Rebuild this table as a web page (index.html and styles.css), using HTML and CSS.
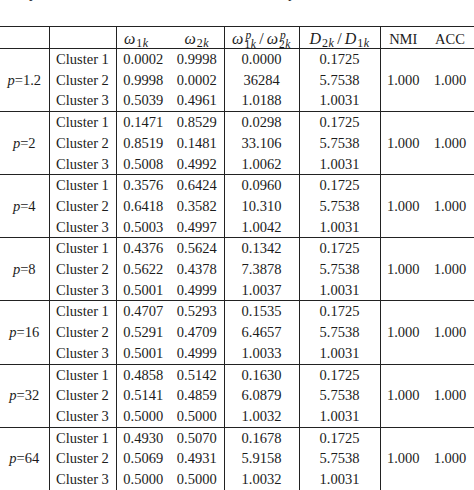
FILE: index.html
```html
<!DOCTYPE html>
<html lang="en">
	<head>
		<meta charset="UTF-8">
		<meta name="viewport" content="width=device-width, initial-scale=1.0">
		<title>Cluster weights for different p</title>
		<link rel="stylesheet" href="styles.css">
	</head>
	<body>
		<div class="caption">Clarity in the NMI ratios for the chosen value of <i>p</i> for all</div>

		<table class="results">
			<colgroup>
				<col class="c-p"><col class="c-cl"><col class="c-w"><col class="c-w">
				<col class="c-ratio"><col class="c-dist"><col class="c-nmi"><col class="c-acc">
			</colgroup>
			<thead>
				<tr>
					<th class="sep"></th>
					<th class="sep"></th>
					<th class="w1"><span class="math"><i>ω</i><sub>1<i>k</i></sub></span></th>
					<th class="sep"><span class="math"><i>ω</i><sub>2<i>k</i></sub></span></th>
					<th class="sep">
						<span class="math"><i>ω</i><span class="supsub"><span class="up"><i>p</i></span><span class="dn">1<i>k</i></span></span><span class="slash">/</span><i>ω</i><span class="supsub"><span class="up"><i>p</i></span><span class="dn">2<i>k</i></span></span></span>
					</th>
					<th class="sep"><span class="math"><i>D</i><sub>2<i>k</i></sub><span class="slash">/</span><i>D</i><sub>1<i>k</i></sub></span></th>
					<th>NMI</th>
					<th>ACC</th>
				</tr>
			</thead>
			<tbody>
				<tr><td rowspan="3" class="sep"><i>p</i>=1.2</td><td class="sep">Cluster 1</td><td>0.0002</td><td class="sep">0.9998</td><td class="sep">0.0000</td><td class="sep">0.1725</td><td rowspan="3">1.000</td><td rowspan="3">1.000</td></tr>
				<tr><td class="sep">Cluster 2</td><td>0.9998</td><td class="sep">0.0002</td><td class="sep">36284</td><td class="sep">5.7538</td></tr>
				<tr><td class="sep">Cluster 3</td><td>0.5039</td><td class="sep">0.4961</td><td class="sep">1.0188</td><td class="sep">1.0031</td></tr>
			</tbody>
			<tbody>
				<tr><td rowspan="3" class="sep"><i>p</i>=2</td><td class="sep">Cluster 1</td><td>0.1471</td><td class="sep">0.8529</td><td class="sep">0.0298</td><td class="sep">0.1725</td><td rowspan="3">1.000</td><td rowspan="3">1.000</td></tr>
				<tr><td class="sep">Cluster 2</td><td>0.8519</td><td class="sep">0.1481</td><td class="sep">33.106</td><td class="sep">5.7538</td></tr>
				<tr><td class="sep">Cluster 3</td><td>0.5008</td><td class="sep">0.4992</td><td class="sep">1.0062</td><td class="sep">1.0031</td></tr>
			</tbody>
			<tbody>
				<tr><td rowspan="3" class="sep"><i>p</i>=4</td><td class="sep">Cluster 1</td><td>0.3576</td><td class="sep">0.6424</td><td class="sep">0.0960</td><td class="sep">0.1725</td><td rowspan="3">1.000</td><td rowspan="3">1.000</td></tr>
				<tr><td class="sep">Cluster 2</td><td>0.6418</td><td class="sep">0.3582</td><td class="sep">10.310</td><td class="sep">5.7538</td></tr>
				<tr><td class="sep">Cluster 3</td><td>0.5003</td><td class="sep">0.4997</td><td class="sep">1.0042</td><td class="sep">1.0031</td></tr>
			</tbody>
			<tbody>
				<tr><td rowspan="3" class="sep"><i>p</i>=8</td><td class="sep">Cluster 1</td><td>0.4376</td><td class="sep">0.5624</td><td class="sep">0.1342</td><td class="sep">0.1725</td><td rowspan="3">1.000</td><td rowspan="3">1.000</td></tr>
				<tr><td class="sep">Cluster 2</td><td>0.5622</td><td class="sep">0.4378</td><td class="sep">7.3878</td><td class="sep">5.7538</td></tr>
				<tr><td class="sep">Cluster 3</td><td>0.5001</td><td class="sep">0.4999</td><td class="sep">1.0037</td><td class="sep">1.0031</td></tr>
			</tbody>
			<tbody>
				<tr><td rowspan="3" class="sep"><i>p</i>=16</td><td class="sep">Cluster 1</td><td>0.4707</td><td class="sep">0.5293</td><td class="sep">0.1535</td><td class="sep">0.1725</td><td rowspan="3">1.000</td><td rowspan="3">1.000</td></tr>
				<tr><td class="sep">Cluster 2</td><td>0.5291</td><td class="sep">0.4709</td><td class="sep">6.4657</td><td class="sep">5.7538</td></tr>
				<tr><td class="sep">Cluster 3</td><td>0.5001</td><td class="sep">0.4999</td><td class="sep">1.0033</td><td class="sep">1.0031</td></tr>
			</tbody>
			<tbody>
				<tr><td rowspan="3" class="sep"><i>p</i>=32</td><td class="sep">Cluster 1</td><td>0.4858</td><td class="sep">0.5142</td><td class="sep">0.1630</td><td class="sep">0.1725</td><td rowspan="3">1.000</td><td rowspan="3">1.000</td></tr>
				<tr><td class="sep">Cluster 2</td><td>0.5141</td><td class="sep">0.4859</td><td class="sep">6.0879</td><td class="sep">5.7538</td></tr>
				<tr><td class="sep">Cluster 3</td><td>0.5000</td><td class="sep">0.5000</td><td class="sep">1.0032</td><td class="sep">1.0031</td></tr>
			</tbody>
			<tbody>
				<tr><td rowspan="3" class="sep"><i>p</i>=64</td><td class="sep">Cluster 1</td><td>0.4930</td><td class="sep">0.5070</td><td class="sep">0.1678</td><td class="sep">0.1725</td><td rowspan="3">1.000</td><td rowspan="3">1.000</td></tr>
				<tr><td class="sep">Cluster 2</td><td>0.5069</td><td class="sep">0.4931</td><td class="sep">5.9158</td><td class="sep">5.7538</td></tr>
				<tr><td class="sep">Cluster 3</td><td>0.5000</td><td class="sep">0.5000</td><td class="sep">1.0032</td><td class="sep">1.0031</td></tr>
			</tbody>
		</table>
	</body>
</html>
```

FILE: styles.css
```css
:root {
    --ink: #1c1c1c;
    --rule: #222;
}

* {
    box-sizing: border-box;
    margin: 0;
    padding: 0;
}

body {
    font-family: 'Liberation Serif', 'Times New Roman', serif;
    font-size: 14.5px;
    color: var(--ink);
    background: #fff;
    overflow: hidden;
    padding-top: 1px;
}

/* caption line sits above the viewport, only descenders show */
.caption {
    font-size: 15px;
    line-height: 18px;
    height: 18px;
    margin-top: -17px;
    text-indent: -5px;
    white-space: nowrap;
    overflow: hidden;
}

/* Table */
.results {
    margin-top: 24px;
    width: 474px;
    border-collapse: collapse;
    table-layout: fixed;
    border-top: 1px solid var(--rule);
    border-bottom: 3px solid var(--rule);
}

.c-p { width: 49px; }
.c-cl { width: 67px; }
.c-w { width: 54px; }
.c-ratio { width: 75px; }
.c-dist { width: 81px; }
.c-nmi { width: 46px; }
.c-acc { width: 48px; }

th, td {
    text-align: center;
    vertical-align: middle;
    font-weight: normal;
    padding: 0;
    white-space: nowrap;
}

td {
    line-height: 20.7px;
}

th {
    height: 22px;
    line-height: 14px;
    padding-top: 3px;
}

.sep {
    border-right: 1px solid var(--rule);
}

tbody {
    border-top: 1px solid var(--rule);
}

/* Math in the header */
.math {
    font-size: 16px;
    line-height: 14px;
}

.math sub {
    font-size: 12px;
    vertical-align: -3px;
    line-height: 0;
    margin-left: 1px;
    letter-spacing: 0.5px;
}

.w1 .math {
    margin-right: 14px;
}

.slash {
    margin: 0 3px;
}

.supsub {
    display: inline-block;
    vertical-align: -4px;
    font-size: 11.5px;
    line-height: 8px;
    text-align: left;
    margin-left: 1px;
    letter-spacing: 0.5px;
}

.supsub span {
    display: block;
}

.supsub .up {
    margin-left: 1px;
    margin-bottom: 1px;
}
```
